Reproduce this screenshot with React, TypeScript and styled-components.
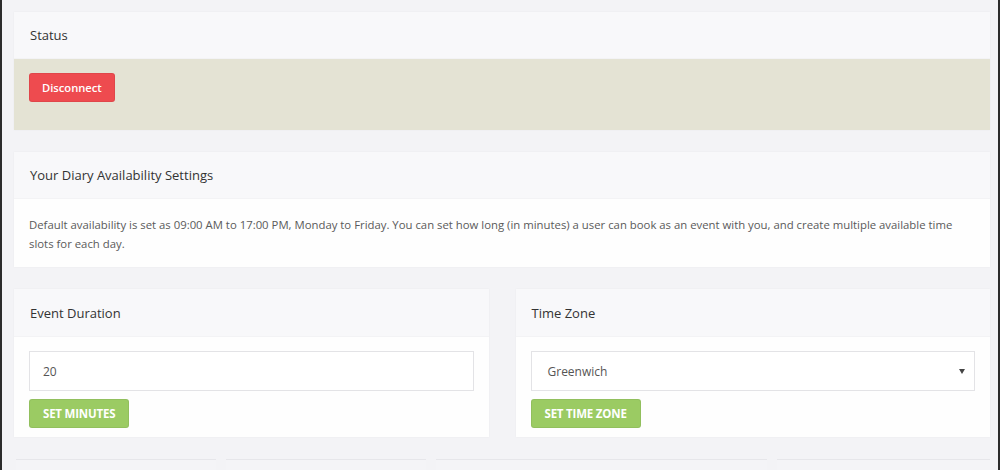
import styled, { createGlobalStyle } from "styled-components";

const GlobalStyle = createGlobalStyle`
  html, body {
    margin: 0;
    padding: 0;
    background: #f3f3f6;
  }
  body {
    font-family: "Open Sans", "Liberation Sans", sans-serif;
    color: #333;
  }
`;

const Page = styled.div`
  height: 470px;
  overflow: hidden;
  box-sizing: border-box;
  border-left: 2px solid #2b2b2b;
  border-right: 2px solid #2b2b2b;
  padding: 12px 8px 0 12px;
  display: flex;
  flex-direction: column;
  gap: 22px;
`;

const Card = styled.section`
  background: #fdfdfe;
  box-shadow: 0 0 2px rgba(0, 0, 0, 0.04);
`;

const CardHeader = styled.header<{ $height?: number }>`
  background: #f8f8fa;
  height: ${(p) => p.$height ?? 47}px;
  box-sizing: border-box;
  padding: 0 16px;
  display: flex;
  align-items: center;
  font-size: 13px;
  color: #333;
  border-bottom: 1px solid #f3f3f5;
`;

const CardBody = styled.div<{ $tone?: string; $height?: number }>`
  background: ${(p) => p.$tone || "#fefefe"};
  padding: 14px 15px 9px;
  min-height: ${(p) => (p.$height ? `${p.$height}px` : "auto")};
  box-sizing: border-box;
`;

const Text = styled.p`
  margin: 2px 0 0;
  font-size: 11.35px;
  line-height: 19px;
  color: #5a5a5a;
`;

const Row = styled.div`
  display: grid;
  grid-template-columns: 1fr 1fr;
  gap: 27px;
`;

const Button = styled.button<{ $color: string; $upper?: boolean }>`
  display: inline-flex;
  align-items: center;
  height: 29px;
  padding: 0 ${(p) => (p.$upper ? 13 : 12)}px;
  border: 1px solid rgba(0, 0, 0, 0.06);
  border-radius: 3px;
  background: ${(p) => p.$color};
  color: #fff;
  font-family: "Open Sans", "Liberation Sans", sans-serif;
  font-size: ${(p) => (p.$upper ? 11.5 : 11.2)}px;
  font-weight: ${(p) => (p.$upper ? 700 : 600)};
  text-transform: ${(p) => (p.$upper ? "uppercase" : "none")};
  letter-spacing: ${(p) => (p.$upper ? "-0.2px" : "0")};
  cursor: pointer;
`;

const Field = styled.div`
  position: relative;
  height: 40px;
  border: 1px solid #e3e3e6;
  background: #fff;
  display: flex;
  align-items: center;
  padding: 0 13px;
  font-size: 12px;
  color: #555;
  margin-bottom: 8px;
  box-sizing: border-box;
`;

const SelectField = styled(Field)`
  padding-left: 16px;
`;

const Caret = styled.span`
  position: absolute;
  right: 9px;
  top: 17px;
  width: 0;
  height: 0;
  border-left: 3px solid transparent;
  border-right: 3px solid transparent;
  border-top: 5px solid #444;
`;

const Strip = styled.div`
  display: grid;
  grid-template-columns: 200px 200px 331px 1fr;
  gap: 10px;
  margin-left: 2px;
`;

const StripCard = styled.div`
  height: 30px;
  background: #f4f4f7;
  border-top: 1px solid #e6e6ea;
`;

export default function App() {
  return (
    <>
      <GlobalStyle />
      <Page>
        <Card>
          <CardHeader>Status</CardHeader>
          <CardBody $tone="#e4e3d4" $height={71}>
            <Button $color="#ee4b4f">Disconnect</Button>
          </CardBody>
        </Card>

        <Card>
          <CardHeader>Your Diary Availability Settings</CardHeader>
          <CardBody $height={68}>
            <Text>
              Default availability is set as 09:00 AM to 17:00 PM, Monday to Friday. You can set how long (in
              minutes) a user can book as an event with you, and create multiple available time slots for each day.
            </Text>
          </CardBody>
        </Card>

        <Row>
          <Card>
            <CardHeader $height={48}>Event Duration</CardHeader>
            <CardBody>
              <Field>20</Field>
              <Button $color="#9bcb63" $upper>
                Set Minutes
              </Button>
            </CardBody>
          </Card>
          <Card>
            <CardHeader $height={48}>Time Zone</CardHeader>
            <CardBody>
              <SelectField>
                Greenwich
                <Caret />
              </SelectField>
              <Button $color="#9bcb63" $upper>
                Set Time Zone
              </Button>
            </CardBody>
          </Card>
        </Row>

        <Strip>
          <StripCard />
          <StripCard />
          <StripCard />
          <StripCard />
        </Strip>
      </Page>
    </>
  );
}
